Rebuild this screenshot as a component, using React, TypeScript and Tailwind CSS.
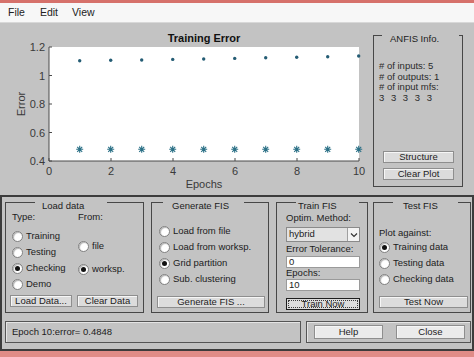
import React from "react";

const TOP_Y = [60.7, 60.3, 60, 59.4, 59, 58.4, 57.8, 57.3, 56.7, 56];
const EPOCHS = [1, 2, 3, 4, 5, 6, 7, 8, 9, 10];
const xOf = (e: number) => 48.7 + 31 * e;

function Btn({ children, className = "" }: { children: React.ReactNode; className?: string }) {
  return (
    <button
      type="button"
      className={`flex items-center justify-center text-[9.5px] leading-none text-[#1c1c1c] bg-[#dcdcdc] border border-[#8e8e8e] shadow-[inset_1px_1px_0_#f6f6f6] ${className}`}
    >
      {children}
    </button>
  );
}

function Radio({ label, checked = false }: { label: string; checked?: boolean }) {
  return (
    <div className="flex h-[16px] items-center">
      <span className="flex h-[11px] w-[11px] items-center justify-center rounded-full border border-[#808080] bg-white shadow-[inset_1px_1px_1px_#b4b4b4]">
        {checked && <span className="h-[5px] w-[5px] rounded-full bg-[#111]" />}
      </span>
      <span className="ml-[3px] text-[9.5px] leading-none text-[#1c1c1c]">{label}</span>
    </div>
  );
}

interface FrameProps {
  title: string;
  lead: string;
  pad: string;
  className?: string;
  children: React.ReactNode;
}

// etched frame with the title sitting in a gap of the top line
function Frame({ title, lead, pad, className = "", children }: FrameProps) {
  return (
    <div className={`flex flex-col border-x border-b border-[#474747] ${className}`}>
      <div className="flex h-[9px] items-start">
        <div className={`border-t border-[#474747] ${lead}`} />
        <span className={`-mt-[2px] whitespace-nowrap text-[9.5px] leading-[11px] text-[#1c1c1c] ${pad}`}>{title}</span>
        <div className="flex-1 border-t border-[#474747]" />
      </div>
      {children}
    </div>
  );
}

function Star({ x, y }: { x: number; y: number }) {
  const r = 3.5;
  const d = 2.5;
  return (
    <path
      d={`M${x - r} ${y}H${x + r}M${x} ${y - r}V${y + r}M${x - d} ${y - d}L${x + d} ${y + d}M${x - d} ${y + d}L${x + d} ${y - d}`}
      stroke="#2a7086"
      strokeWidth="1.1"
      fill="none"
    />
  );
}

function TrainingPlot() {
  const yTicks: [string, number][] = [
    ["1.2", 47],
    ["1", 75.5],
    ["0.8", 104],
    ["0.6", 132.5],
    ["0.4", 161],
  ];
  const xTicks = [0, 2, 4, 6, 8, 10];
  return (
    <svg width="373" height="172" viewBox="0 23 373 172" fontFamily="'Liberation Sans', Arial, sans-serif">
      <rect x="49" y="47" width="310" height="114" fill="#ffffff" />
      <text x="204" y="42" textAnchor="middle" fontSize="11" fontWeight="bold" fill="#111">
        Training Error
      </text>
      <path d="M49 47V161H359" stroke="#4a4a4a" strokeWidth="1" fill="none" />
      {yTicks.map(([label, y]) => (
        <g key={label}>
          <path d={`M49 ${y}H52`} stroke="#4a4a4a" />
          <text x="45" y={y + 4} textAnchor="end" fontSize="11" fill="#3a3a3a">
            {label}
          </text>
        </g>
      ))}
      {xTicks.map((t) => (
        <g key={t}>
          <path d={`M${49 + 31 * t} 161V158`} stroke="#4a4a4a" />
          <text x={49 + 31 * t} y="175" textAnchor="middle" fontSize="11" fill="#3a3a3a">
            {t}
          </text>
        </g>
      ))}
      <text x="204" y="188" textAnchor="middle" fontSize="11" fill="#3a3a3a">
        Epochs
      </text>
      <text x="0" y="0" transform="translate(25 104) rotate(-90)" textAnchor="middle" fontSize="11" fill="#3a3a3a">
        Error
      </text>
      {EPOCHS.map((e, i) => (
        <circle key={`d${e}`} cx={xOf(e)} cy={TOP_Y[i]} r="1.7" fill="#245c74" />
      ))}
      {EPOCHS.map((e) => (
        <Star key={`s${e}`} x={xOf(e)} y={149.3} />
      ))}
    </svg>
  );
}

export default function App() {
  return (
    <div className="flex h-[357px] w-[474px] flex-col overflow-hidden bg-[#c3c3c3] font-['Liberation_Sans',Arial,sans-serif] text-[#1c1c1c]">
      <div className="h-[3px] bg-[#d6716b]" />

      {/* menu bar */}
      <div className="flex h-[20px] items-center border-b border-[#d8d8d8] bg-[#f7f7f7] text-[10.5px] text-[#222]">
        <span className="ml-[8px]">File</span>
        <span className="ml-[15px]">Edit</span>
        <span className="ml-[14px]">View</span>
      </div>

      {/* plot + info */}
      <div className="flex h-[172px]">
        <TrainingPlot />
        <Frame title="ANFIS Info." className="mt-[12px] h-[152px] w-[90px]" lead="w-[8px]" pad="pl-[8px] pr-[20px]">
          <div className="flex flex-col pl-[5px] pt-[17px] text-[9.5px] leading-[10.7px] text-[#2a2a2a]">
            <span># of inputs: 5</span>
            <span># of outputs: 1</span>
            <span># of input mfs:</span>
            <span className="tracking-[2px]">3 3 3 3 3</span>
          </div>
          <div className="mt-auto flex flex-col gap-[5px] pb-[6px] pl-[9px] pr-[8px]">
            <Btn className="h-[12px]">Structure</Btn>
            <Btn className="h-[12px]">Clear Plot</Btn>
          </div>
        </Frame>
      </div>

      {/* control section */}
      <div className="flex h-[156px] flex-col border-2 border-[#3c3c3c] pl-[3px] pr-[1px] pt-[5px]">
        <div className="flex h-[111px]">
          <Frame title="Load data" className="w-[139px]" lead="w-[29px]" pad="pl-[7px] pr-[23px]">
            <div className="flex pl-[6px]">
              <div className="flex w-[66px] flex-col">
                <span className="flex h-[12px] items-center text-[9.5px]">Type:</span>
                <div className="mt-[5px] flex flex-col">
                  <Radio label="Training" />
                  <Radio label="Testing" />
                  <Radio label="Checking" checked />
                  <Radio label="Demo" />
                </div>
              </div>
              <div className="flex flex-col">
                <span className="flex h-[12px] items-center text-[9.5px]">From:</span>
                <div className="mt-[15px]">
                  <Radio label="file" />
                </div>
                <div className="mt-[7px]">
                  <Radio label="worksp." checked />
                </div>
              </div>
            </div>
            <div className="mt-[3px] flex gap-[5px] pl-[4px]">
              <Btn className="h-[12px] w-[62px]">Load Data...</Btn>
              <Btn className="h-[12px] w-[61px]">Clear Data</Btn>
            </div>
          </Frame>

          <Frame title="Generate FIS" className="ml-[7px] w-[118px]" lead="w-[11px]" pad="pl-[9px] pr-[15px]">
            <div className="mt-[12px] flex flex-col pl-[7px]">
              <Radio label="Load from file" />
              <Radio label="Load from worksp." />
              <Radio label="Grid partition" checked />
              <Radio label="Sub. clustering" />
            </div>
            <div className="mt-[9px] pl-[5px] pr-[3px]">
              <Btn className="h-[12px] w-full">Generate FIS ...</Btn>
            </div>
          </Frame>

          <Frame title="Train FIS" className="ml-[7px] w-[92px]" lead="w-[19px]" pad="pl-[2px] pr-[22px]">
            <div className="flex flex-col pl-[9px] pr-[7px] text-[9.5px]">
              <span className="mt-[2px] leading-[10px]">Optim. Method:</span>
              <div className="mt-[4px] flex h-[15px] border border-[#8a8a8a] bg-[#e2e2e2]">
                <span className="flex flex-1 items-center pl-[2px]">hybrid</span>
                <span className="flex w-[12px] items-center justify-center border-l border-[#a0a0a0] bg-[#f3f3f3]">
                  <svg width="8" height="6" viewBox="0 0 8 6">
                    <path d="M1 1.5L4 4.5L7 1.5" stroke="#333" strokeWidth="1.2" fill="none" />
                  </svg>
                </span>
              </div>
              <span className="mt-[2px] leading-[10px]">Error Tolerance:</span>
              <div className="mt-[2px] flex h-[12px] items-center border border-[#9a9a9a] bg-white pl-[2px]">0</div>
              <span className="leading-[10px]">Epochs:</span>
              <div className="mt-[1px] flex h-[12px] items-center border border-[#9a9a9a] bg-white pl-[2px]">10</div>
              <button
                type="button"
                className="mt-[7px] flex h-[12px] border border-[#1e1e1e] bg-[#dcdcdc] p-[1px] text-[9.5px] leading-none"
              >
                <span className="flex flex-1 items-center justify-center border border-dotted border-[#3a3a3a]">Train Now</span>
              </button>
            </div>
          </Frame>

          <Frame title="Test FIS" className="ml-[5px] w-[98px]" lead="w-[19px]" pad="pl-[10px] pr-[20px]">
            <div className="flex flex-col pl-[5px] pr-[2px]">
              <span className="mt-[17px] text-[9.5px] leading-[10px]">Plot against:</span>
              <div className="mt-[1px] flex flex-col">
                <Radio label="Training data" checked />
                <Radio label="Testing data" />
                <Radio label="Checking data" />
              </div>
              <Btn className="mt-[9px] h-[12px] w-full">Test Now</Btn>
            </div>
          </Frame>
        </div>

        {/* status row */}
        <div className="mt-[8px] flex h-[22px]">
          <div className="flex w-[296px] items-center border border-[#555] pl-[6px] text-[9.5px] shadow-[inset_1px_1px_0_#e4e4e4]">
            Epoch 10:error= 0.4848
          </div>
          <div className="ml-[5px] flex flex-1 items-center border border-[#555] pl-[7px] shadow-[inset_1px_1px_0_#e4e4e4]">
            <Btn className="h-[14px] w-[69px] bg-[#ebebeb]">Help</Btn>
            <Btn className="ml-[13px] h-[14px] w-[69px] bg-[#ebebeb]">Close</Btn>
          </div>
        </div>
      </div>

      <div className="flex-1 bg-[#e08c87]" />
    </div>
  );
}
